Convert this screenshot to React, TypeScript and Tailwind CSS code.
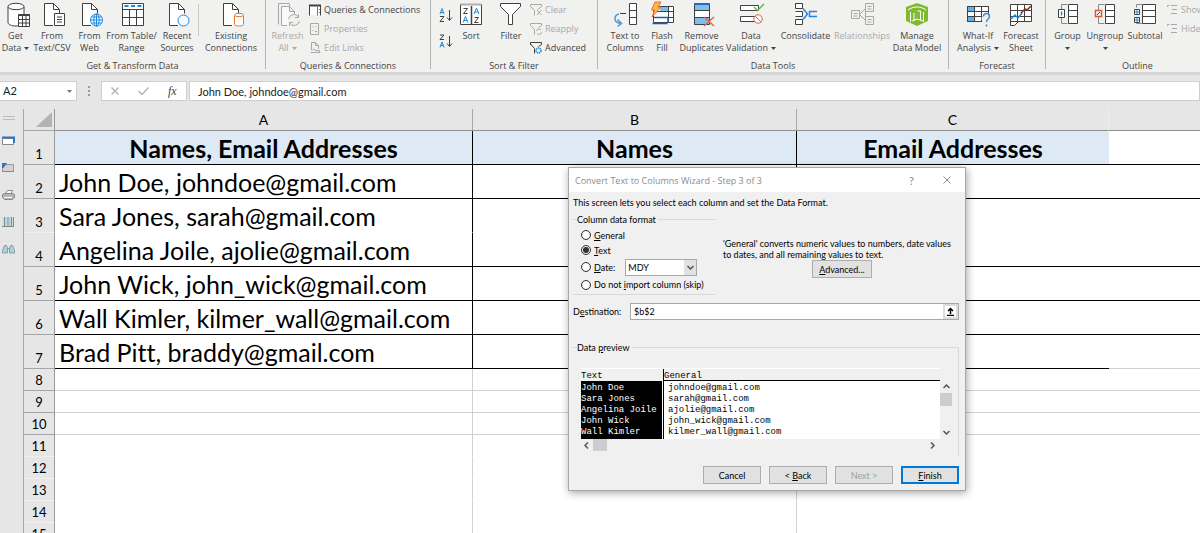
import type { ReactNode } from 'react';

const INK = '#404040';
const BLUE = '#1e88e0';
const GRAY = '#a8a8a8';

function Caret() {
  return (
    <svg width="5" height="3" viewBox="0 0 5 3" className="inline-block shrink-0">
      <path d="M0 0h5L2.5 3z" fill="currentColor" />
    </svg>
  );
}

/* ---------- Ribbon icons, all drawn on a 24 x 24 grid ---------- */

function Icon({ children, color = INK }: { children: ReactNode; color?: string }) {
  return (
    <svg
      width="24"
      height="24"
      viewBox="0 0 24 24"
      fill="none"
      stroke={color}
      className="shrink-0 overflow-visible"
      aria-hidden="true"
    >
      {children}
    </svg>
  );
}

function Doc({ children, color = INK }: { children?: ReactNode; color?: string }) {
  return (
    <Icon color={color}>
      <path d="M13 23.5H4.5v-22h9l6 6v4l-6 12z" fill="#fff" stroke="none" />
      <path d="M13 23.5H4.5v-22h9l6 6v4M13.5 1.5v6h6" />
      {children}
    </Icon>
  );
}

const GetDataIcon = () => (
  <Icon>
    <path d="M4 4.5v16c0 2 3.5 3.5 8 3.5s8-1.5 8-3.5v-16" fill="#fff" />
    <ellipse cx="12" cy="4.5" rx="8" ry="3.2" fill="#fff" />
    <path d="M14.5 12.5h11v12h-11z" fill="#fff" />
    <path d="M14.5 13h11" strokeWidth="2" />
    <path d="M14.5 17.5h11M14.5 21h11M18.5 13v11M22 13v11" />
  </Icon>
);

const FromTextIcon = () => (
  <Doc>
    <path d="M14.5 11.5h10v12h-10z" fill="#fff" />
    <path d="M17 15h5M17 17.5h5M17 20h5" />
  </Doc>
);

const FromWebIcon = () => (
  <Doc>
    <g stroke={BLUE}>
      <circle cx="18.5" cy="18" r="6" fill="#fff" />
      <ellipse cx="18.5" cy="18" rx="2.7" ry="6" />
      <path d="M12.5 18h12M13.5 15h10M13.5 21h10M18.5 12v12" />
    </g>
  </Doc>
);

const FromTableIcon = () => (
  <Icon>
    <path d="M2.5 1.5h21v22h-21z" fill="#fff" />
    <path d="M2.5 7.5h21M2.5 15.5h21M9.5 7.5v16M16.5 7.5v16" />
    <path d="M4.5 4h4M11 4h4M17.5 4h4" stroke={BLUE} strokeWidth="2" />
  </Icon>
);

const RecentIcon = () => (
  <Doc>
    <circle cx="18.5" cy="18.5" r="5.5" fill="#f6fafd" stroke={BLUE} />
  </Doc>
);

const ExistingIcon = () => (
  <Doc>
    <g stroke="#e07a35">
      <path d="M15.5 13.5v9c0 2 9 2 9 0v-9" fill="#fff" />
      <ellipse cx="20" cy="13" rx="4.5" ry="1.7" fill="#fff" />
    </g>
  </Doc>
);

const RefreshIcon = () => (
  <Icon color={GRAY}>
    <path d="M2.5 22.5v-21h11v3" />
    <path d="M11 23.5H5.5v-19h8l5 5v3M13.5 4.5v5h5" fill="#f8f8f8" />
    <circle cx="18" cy="18" r="6" fill="#f1f1f0" stroke="none" />
    <path d="M12.5 17a5.5 5.5 0 0 1 10-2M22.5 12v3.5H19M23.5 19a5.5 5.5 0 0 1-10 2M13.5 24v-3.5H17" />
  </Icon>
);

const SortIcon = () => (
  <Icon>
    <path d="M1.5 2.5h21v20h-21z" fill="#fff" />
    <path d="M1.5 2.5h21" strokeWidth="2" stroke="#b0b0b0" />
    <path d="M12.5 4v18" strokeWidth="1.5" />
    <path d="M4.5 6.5h4l-4 5h4M15.5 15.5h4l-4 5h4" />
    <path d="M4 20.5l2.5-6 2.5 6M5 18.5h3M15 12l2.5-6L20 12M16 10h3" stroke={BLUE} />
  </Icon>
);

const FilterIcon = () => (
  <Icon>
    <path d="M1.5 1.5h20v3l-8 8v10h-4v-10l-8-8z" fill="#fff" />
  </Icon>
);

const TextToColumnsIcon = () => (
  <Icon>
    <path d="M16.5 1.5h7v21h-7" fill="#fff" />
    <path d="M16.5 1.5v21M16.5 8.5h7M16.5 15.5h7M7 11.5h6" />
    <path d="M6 12c-5 1-6 8 1 9.500M4.500 17.500l4 4-4 3" stroke="#4a9ad8" strokeWidth="1.500" />
  </Icon>
);

const FlashFillIcon = () => (
  <Icon>
    <path d="M3.5 4.5h20v16h-20z" fill="#fff" />
    <path d="M10 5h8v5h-8z" fill="#7cc0ee" stroke="none" />
    <path d="M3.5 9.5h20M3.5 15.5h20M18.5 4.5v16" />
    <path d="M2.5 21.5h15M4 15.5h14v5.5" stroke="#1f5fa8" strokeWidth="1.5" />
    <path d="M5 0h6L8 5h3L2 15l2.5-7h-3z" fill="#ffb54c" stroke="#e8722c" />
  </Icon>
);

const RemoveDuplicatesIcon = () => (
  <Icon>
    <path d="M4.5 1.5h15v21h-15z" fill="#fff" />
    <path d="M5 2h14v6H5zM5 16h14v6H5z" fill="#7cc0ee" stroke="none" />
    <path d="M4 2h16" stroke="#2a6ab0" strokeWidth="2" />
    <path d="M4.5 8.5h15M4.5 15.5h15" />
    <path d="M14 15l10 9M24 15l-10 9" stroke="#d9694a" strokeWidth="1.5" />
  </Icon>
);

const DataValidationIcon = () => (
  <Icon>
    <path d="M1.5 3.5h18v5h-18zM1.5 14.5h18v5h-18z" fill="#fff" />
    <path d="M15 5l3.5 3.5L25 2" stroke="#71b544" strokeWidth="1.5" />
    <circle cx="19" cy="17" r="4.2" fill="#fff" stroke="#e0603a" />
    <path d="M16 14l6 6" stroke="#e0603a" />
  </Icon>
);

const ConsolidateIcon = () => (
  <Icon>
    <path d="M8.5 1.500v5h-7v-5zM1.500 1.500h7M1.500 9.500h7v5h-7M8.500 17.500h-7v5h7z" fill="#fff" />
    <path d="M9 6.500l4.500 5.500L9 17.500M23 9.500h-7.500v5H23" stroke={BLUE} strokeWidth="1.500" />
  </Icon>
);

const RelationshipsIcon = () => (
  <Icon color={GRAY}>
    <path d="M1.5 8.5h8v8h-8zM15.5 1.5h8v8h-8zM15.5 14.5h8v8h-8z" />
    <path d="M3.5 11.5h4M3.5 14h4M17.5 4.5h4M17.5 7h4M17.5 17.5h4M17.5 20h4M9.5 12.5l6-6v12z" />
  </Icon>
);

const DataModelIcon = () => (
  <Icon>
    <path d="M12 1l11 4v14l-11 5-11-5V5z" fill="#7fba2f" stroke="none" />
    <path d="M3 8c5-4 13-4 18 0M5.5 10v10M18.5 10v10M9 11v8M12.5 9h3v9M7 19l5-2 6 2" stroke="#fff" />
  </Icon>
);

const WhatIfIcon = () => (
  <Icon>
    <path d="M1.5 4.5h21v15h-21z" fill="#fff" />
    <path d="M2 5h7v4H2zM2 15h7v4H2z" fill="#5fb0ea" stroke="none" />
    <path d="M1.5 4.5h21v15h-21zM1.5 9.5h21M1.5 14.5h21M8.5 4.5v15M15.5 4.5v15" />
    <circle cx="20.5" cy="17" r="5" fill="#f1f1f0" stroke="none" />
    <path d="M17.5 14.5c0-4 6-4 6 0 0 2.5-3 2.5-3 5.5M20.5 22.5v2" stroke="#3a90d8" strokeWidth="1.5" />
  </Icon>
);

const ForecastIcon = () => (
  <Icon>
    <path d="M1.5 2.5h21v17h-13l-4 4h-4z" fill="#fff" />
    <path d="M1.5 8.5h21M1.5 14.5h21M8.5 2.5v17M15.5 2.5v17M2 19.5h8" />
    <path d="M2 17l4-4 3 3 4-5" stroke={BLUE} strokeWidth="1.5" />
    <path d="M12 11l4-4 2 1 4-4" stroke="#8a2b1c" strokeWidth="1.5" />
  </Icon>
);

const GroupIcon = () => (
  <Icon>
    <path d="M11.5 2.5h-6v19h6" stroke="#8a8a8a" />
    <path d="M12.5 2.5h9v19h-9zM12.5 8.5h9M12.5 14.5h9" fill="#fff" />
    <path d="M2.5 7.5h6v8h-6z" fill="#fff" />
    <path d="M5.5 9.5v4" stroke={BLUE} strokeWidth="1.5" />
  </Icon>
);

const UngroupIcon = () => (
  <Icon>
    <path d="M11.5 2.5h-6v19h6" stroke="#8a8a8a" />
    <path d="M12.5 2.5h9v19h-9zM12.5 8.5h9M12.5 14.5h9" fill="#fff" />
    <path d="M2.5 8.5h6v6h-6z" fill="#fff" stroke="#e0552c" strokeWidth="1.5" />
    <path d="M4 13l3-3" />
  </Icon>
);

const SubtotalIcon = () => (
  <Icon>
    <path d="M9.5 2.5h13v19h-13zM9.5 8.5h13M9.5 14.5h13" fill="#fff" />
    <path d="M9 2.5H3.5v3M9 21.5H3.5v-1" stroke="#8a8a8a" />
    <path d="M1.5 7.5h5v5h-5zM1.5 15.5h5v5h-5z" fill="#fff" />
    <path d="M2 10h4M4 8v4M2 18h4M4 16v4" stroke={BLUE} />
  </Icon>
);

/* ---------- Small ribbon icons, 12 x 12 ---------- */

function SmallIcon({ children, color = INK }: { children: ReactNode; color?: string }) {
  return (
    <svg width="12" height="12" viewBox="0 0 12 12" fill="none" stroke={color} className="shrink-0" aria-hidden="true">
      {children}
    </svg>
  );
}

const QueriesIcon = () => (
  <SmallIcon>
    <path d="M1 2h10v9H1z" fill="#fff" stroke="none" />
    <path d="M.5 1v10.5M11.5 1v10.5" />
    <path d="M0 1.5h12" strokeWidth="2" />
    <path d="M8.5 3v8.5M10.5 5v1M10.5 8v1" stroke={BLUE} />
  </SmallIcon>
);

const PropertiesIcon = () => (
  <SmallIcon color={GRAY}>
    <path d="M1.5.5h8v11h-8zM3.5 4h1M6.5 3.5h1M3.5 7.5h1M6 8.5h2" />
  </SmallIcon>
);

const EditLinksIcon = () => (
  <SmallIcon color={GRAY}>
    <path d="M2.5 8V.5h4l3 3V7M6.5.5v3h3M3 8.5c1.5-2 4-1 4 .5M1.5 10.5h10M6 8.5h4.5v2" />
  </SmallIcon>
);

const ClearIcon = () => (
  <SmallIcon color={GRAY}>
    <path d="M.5.5h11v2l-4 3M.5.5v2l4 4v5M7 6l4.5 5M11.5 6L7 11" />
  </SmallIcon>
);

const ReapplyIcon = () => (
  <SmallIcon color={GRAY}>
    <path d="M.5.5h11v2l-3 2M.5.5v2l4 4v5M6.5 8a2.5 2.5 0 0 1 4.5-1M11.5 9A2.5 2.5 0 0 1 7 10.5" />
  </SmallIcon>
);

const AdvancedIcon = () => (
  <SmallIcon>
    <path d="M.5 3V.5h11v2l-3 2M.5 2l4 4.5v5" />
    <circle cx="8.5" cy="8.5" r="2.5" stroke={BLUE} strokeWidth="1.5" strokeDasharray="1.5 .6" />
  </SmallIcon>
);

const DetailIcon = () => (
  <SmallIcon color={GRAY}>
    <path d="M1.5 3V1.5h2M5 1.5h6M6 5.5h5M5 9.5h6" />
  </SmallIcon>
);

function SortOrder({ flip, label }: { flip?: boolean; label: string }) {
  return (
    <button type="button" aria-label={label}>
      <svg width="14" height="14" viewBox="0 0 14 14" fill="none" className="block">
        <path d={flip ? 'M1 13.5L3 8l2 5.5M1.8 11.500h2.500' : 'M1 6L3 .5 5 6M1.800 4.500h2.500'} stroke={BLUE} />
        <path d={flip ? 'M1 1h4L1 5.500h4' : 'M1 8.500h4l-4 5h4'} stroke={INK} />
        <path d="M10.5 2v10M8 9.5l2.5 3 2.5-3" stroke={INK} />
      </svg>
    </button>
  );
}

/* ---------- Ribbon ---------- */

type RibbonButtonProps = {
  icon: ReactNode;
  lines: [string, string?];
  width: string;
  caret?: boolean;
  disabled?: boolean;
};

function RibbonButton({ icon, lines, width, caret, disabled }: RibbonButtonProps) {
  return (
    <button
      type="button"
      disabled={disabled}
      className={`${width} flex shrink-0 flex-col items-center gap-1 pt-0.5 text-[#444] disabled:text-[#a8a8a8]`}
    >
      {icon}
      <span className="flex flex-col items-center leading-3 whitespace-nowrap">
        <span>{lines[0]}</span>
        <span className="flex h-3 items-center gap-[3px]">
          {lines[1]}
          {caret && <Caret />}
        </span>
      </span>
    </button>
  );
}

function SmallButton({ icon, label, disabled }: { icon: ReactNode; label: string; disabled?: boolean }) {
  return (
    <button
      type="button"
      disabled={disabled}
      className="flex h-[19px] items-center gap-[3px] whitespace-nowrap text-[#444] disabled:text-[#a8a8a8]"
    >
      {icon}
      {label}
    </button>
  );
}

function Group({ label, width, children }: { label: string; width: string; children: ReactNode }) {
  return (
    <section aria-label={label} className={`${width} h-[72px] shrink-0`}>
      <div className="flex h-[69px] flex-col border-r border-[#b4b4b4]">
        <div className="flex h-[59px] shrink-0">{children}</div>
        <span className="shrink-0 text-center leading-[13px] text-[#444]">{label}</span>
      </div>
    </section>
  );
}

function Ribbon() {
  return (
    <div className="flex h-[72px] shrink-0 overflow-hidden bg-[#f1f1f0] font-['Open_Sans',sans-serif] text-[9px]">
      <Group label="Get & Transform Data" width="w-[266px]">
        <RibbonButton icon={<GetDataIcon />} lines={['Get', 'Data']} width="w-[31px]" caret />
        <RibbonButton icon={<FromTextIcon />} lines={['From', 'Text/CSV']} width="w-[42px]" />
        <RibbonButton icon={<FromWebIcon />} lines={['From', 'Web']} width="w-[33px]" />
        <RibbonButton icon={<FromTableIcon />} lines={['From Table/', 'Range']} width="w-[51px]" />
        <RibbonButton icon={<RecentIcon />} lines={['Recent', 'Sources']} width="w-[40px]" />
        <div className="mx-px mt-1 h-8 w-px bg-[#c8c8c8]" />
        <RibbonButton icon={<ExistingIcon />} lines={['Existing', 'Connections']} width="w-[62px]" />
      </Group>

      <Group label="Queries & Connections" width="w-[165px]">
        <RibbonButton icon={<RefreshIcon />} lines={['Refresh', 'All']} width="w-[43px]" caret disabled />
        <div className="flex flex-col">
          <SmallButton icon={<QueriesIcon />} label="Queries & Connections" />
          <SmallButton icon={<PropertiesIcon />} label="Properties" disabled />
          <SmallButton icon={<EditLinksIcon />} label="Edit Links" disabled />
        </div>
      </Group>

      <Group label="Sort & Filter" width="w-[167px]">
        <div className="ml-2 flex w-[18px] flex-col gap-3 pt-2">
          <SortOrder label="Sort A to Z" />
          <SortOrder label="Sort Z to A" flip />
        </div>
        <RibbonButton icon={<SortIcon />} lines={['Sort']} width="w-[28px]" />
        <RibbonButton icon={<FilterIcon />} lines={['Filter']} width="w-[52px]" />
        <div className="-ml-[7px] flex flex-col">
          <SmallButton icon={<ClearIcon />} label="Clear" disabled />
          <SmallButton icon={<ReapplyIcon />} label="Reapply" disabled />
          <SmallButton icon={<AdvancedIcon />} label="Advanced" />
        </div>
      </Group>

      <Group label="Data Tools" width="w-[351px]">
        <div className="flex pl-2">
          <RibbonButton icon={<TextToColumnsIcon />} lines={['Text to', 'Columns']} width="w-[38px]" />
          <RibbonButton icon={<FlashFillIcon />} lines={['Flash', 'Fill']} width="w-[36px]" />
          <RibbonButton icon={<RemoveDuplicatesIcon />} lines={['Remove', 'Duplicates']} width="w-[43px]" />
          <RibbonButton icon={<DataValidationIcon />} lines={['Data', 'Validation']} width="w-[56px]" caret />
          <RibbonButton icon={<ConsolidateIcon />} lines={['Consolidate']} width="w-[53px]" />
          <RibbonButton icon={<RelationshipsIcon />} lines={['Relationships']} width="w-[60px]" disabled />
          <RibbonButton icon={<DataModelIcon />} lines={['Manage', 'Data Model']} width="w-[50px]" />
        </div>
      </Group>

      <Group label="Forecast" width="w-[97px]">
        <div className="flex pl-2">
          <RibbonButton icon={<WhatIfIcon />} lines={['What-If', 'Analysis']} width="w-[42px]" caret />
          <RibbonButton icon={<ForecastIcon />} lines={['Forecast', 'Sheet']} width="w-[44px]" />
        </div>
      </Group>

      <Group label="Outline" width="w-[184px]">
        <div className="flex pl-1">
          <RibbonButton icon={<GroupIcon />} lines={['Group', '']} width="w-[35px]" caret />
          <RibbonButton icon={<UngroupIcon />} lines={['Ungroup', '']} width="w-[40px]" caret />
          <RibbonButton icon={<SubtotalIcon />} lines={['Subtotal']} width="w-[40px]" />
          <div className="flex flex-col pl-px">
            <SmallButton icon={<DetailIcon />} label="Show Detail" disabled />
            <SmallButton icon={<DetailIcon />} label="Hide Detail" disabled />
          </div>
        </div>
      </Group>
    </div>
  );
}

/* ---------- Formula bar ---------- */

function FormulaBar() {
  return (
    <div className="flex h-[37px] shrink-0 border-t-[3px] border-[#d6d6d6] bg-[#e6e6e6] pt-1.5 font-['Lato',sans-serif] text-[11px] text-[#222]">
      <div className="flex h-5 w-[77px] items-center border border-l-0 border-[#cfcfcf] bg-white pr-1 pl-[3px]">
        <input aria-label="Name box" defaultValue="A2" className="w-0 flex-1 outline-none" />
        <button type="button" aria-label="Open name list" className="text-[#777]">
          <Caret />
        </button>
      </div>
      <div className="flex h-5 w-6 flex-col items-center justify-center gap-0.5">
        <span className="size-0.5 bg-[#999]" />
        <span className="size-0.5 bg-[#999]" />
        <span className="size-0.5 bg-[#999]" />
      </div>
      <div className="flex h-5 w-[86px] items-center justify-around border border-[#cfcfcf] bg-white">
        <button type="button" aria-label="Cancel entry">
          <svg width="8" height="8" viewBox="0 0 8 8" stroke="#b5b5b5" strokeWidth="1.5">
            <path d="M.5.5l7 7M7.5.5l-7 7" />
          </svg>
        </button>
        <button type="button" aria-label="Enter">
          <svg width="11" height="8" viewBox="0 0 11 8" fill="none" stroke="#b5b5b5" strokeWidth="1.5">
            <path d="M.5 4L4 7.5l6.5-7" />
          </svg>
        </button>
        <button type="button" className="font-['Liberation_Serif',serif] text-xs text-[#444] italic">
          fx
        </button>
      </div>
      <input
        aria-label="Formula"
        defaultValue="John Doe, johndoe@gmail.com"
        className="ml-0.5 h-5 flex-1 border border-[#cfcfcf] bg-white px-2 outline-none"
      />
    </div>
  );
}

/* ---------- Side toolbar ---------- */

function SideToolbar() {
  return (
    <div
      role="toolbar"
      aria-label="Quick tools"
      className="flex w-6 shrink-0 flex-col items-center gap-[15px] border-r border-[#a6a6a6] pt-[7px] pr-1.5"
    >
      <div className="flex h-1 w-3 flex-col justify-between">
        <span className="h-px bg-[#bdbdbd]" />
        <span className="h-px bg-[#bdbdbd]" />
      </div>
      <button type="button" aria-label="Freeze panes">
        <svg width="13" height="12" viewBox="0 0 13 12" fill="none" className="block">
          <path d="M.5 3.5h11v6H.5z" fill="#fff" stroke="#888" />
          <path d="M0 2.5h13M12 2v6" stroke="#2f75c0" strokeWidth="2" />
        </svg>
      </button>
      <button type="button" aria-label="Select object">
        <svg width="13" height="12" viewBox="0 0 13 12" fill="none" className="block">
          <path d="M.5 2.5h11v7H.5z" fill="#d8d0d0" stroke="#999" />
          <path d="M0 1h5L1.5 6H0z" fill="#2f75c0" />
          <path d="M0 9.5h12" stroke="#888" />
        </svg>
      </button>
      <button type="button" aria-label="Print">
        <svg width="13" height="12" viewBox="0 0 13 12" fill="none" stroke="#888" className="block">
          <path d="M3.5 4.5l2-3h5l-1.5 3" fill="#fff" />
          <path d="M.5 5.5l2-1h8l2 1v3l-2 2h-8l-2-2z" fill="#b4b4b4" />
          <path d="M2 8.5h8" stroke="#fff" />
        </svg>
      </button>
      <button type="button" aria-label="Columns">
        <svg width="13" height="12" viewBox="0 0 13 12" fill="none" className="block">
          <path d="M0 1.5h12v9H0z" fill="#dcdcdc" />
          <path d="M4 1v10M8 1v10" stroke="#a9dbe8" strokeWidth="2" />
          <path d="M2.5 1v10M6 1v10M9.5 1v10M11.5 1v10M0 10.5h12" stroke="#888" />
        </svg>
      </button>
      <button type="button" aria-label="Find">
        <svg width="13" height="12" viewBox="0 0 13 12" fill="none" stroke="#8a9a9e" className="block">
          <path d="M.5 10V7.5l2-5h2l1 3V10zM7.5 10V5.5l1-3h2l2 5V10z" fill="#a9d3dc" />
          <path d="M5 5.5h3" />
        </svg>
      </button>
    </div>
  );
}

/* ---------- Worksheet ---------- */

const people = [
  'John Doe, johndoe@gmail.com',
  'Sara Jones, sarah@gmail.com',
  'Angelina Joile, ajolie@gmail.com',
  'John Wick, john_wick@gmail.com',
  'Wall Kimler, kilmer_wall@gmail.com',
  'Brad Pitt, braddy@gmail.com',
];

const emptyRows = [8, 9, 10, 11, 12, 13, 14, 15];

function RowHeader({ n, faint }: { n: number; faint?: boolean }) {
  return (
    <th
      scope="row"
      className={`border-r border-b border-r-[#999] bg-[#e6e6e6] text-center align-bottom text-[13px] leading-[20px] font-normal ${
        faint ? 'border-b-[#efefef]' : 'border-b-[#a6a6a6]'
      }`}
    >
      {n}
    </th>
  );
}

function Sheet() {
  const heading = 'border-b border-black bg-[#dde9f5] text-center text-[25px] leading-[30px] font-bold';
  const letter = 'border-r border-b border-b-[#8e8e8e] text-[14px] leading-[20px] font-normal';
  return (
    <table className="w-full min-w-0 flex-1 table-fixed border-separate border-spacing-0 self-start font-['Lato',sans-serif] text-black [font-variant-ligatures:none]">
      <colgroup>
        <col className="w-[31px]" />
        <col className="w-[418px]" />
        <col className="w-[324px]" />
        <col className="w-[312px]" />
        <col />
      </colgroup>
      <thead>
        <tr className="h-[22px] bg-[#e6e6e6]">
          <td className="border-r border-b border-r-[#999] border-b-[#a6a6a6] pr-0.5">
            <svg width="16" height="15" viewBox="0 0 16 15" className="ml-auto block">
              <path d="M16 0v15H0z" fill="#b5b2b0" />
            </svg>
          </td>
          <th scope="col" className={`${letter} border-r-[#a6a6a6]`}>A</th>
          <th scope="col" className={`${letter} border-r-[#a6a6a6]`}>B</th>
          <th scope="col" className={`${letter} border-r-[#efefef]`}>C</th>
          <td className="border-b border-[#8e8e8e]" />
        </tr>
      </thead>
      <tbody>
        <tr className="h-[34px]">
          <RowHeader n={1} />
          <td className={`${heading} border-r`}>Names, Email Addresses</td>
          <td className={`${heading} border-r`}>Names</td>
          <td className={heading}>Email Addresses</td>
          <td className="border-b border-black" />
        </tr>
        {people.map((person, i) => {
          // row 3 has no rule under it, and the last rule stops at column C
          const rule = i === 1 ? 'border-b-transparent' : 'border-b-black';
          const last = i === people.length - 1;
          return (
            <tr key={person} className="h-[34px]">
              <RowHeader n={i + 2} faint={i === 1} />
              <td className={`border-r border-b border-r-black pl-1 text-[25px] leading-[30px] whitespace-nowrap ${rule}`}>
                {person}
              </td>
              <td className={`border-r border-b border-r-black ${rule}`} />
              <td className={`border-b ${rule}`} />
              <td className={`border-b ${last ? 'border-b-[#d0d0d0]' : rule}`} />
            </tr>
          );
        })}
        {emptyRows.map((n) => {
          const rule = n < 11 ? 'border-b-[#d0d0d0]' : 'border-b-transparent';
          return (
            <tr key={n} className="h-[22px]">
              <RowHeader n={n} faint={n > 10} />
              <td className={`border-r border-b border-r-[#d0d0d0] ${rule}`} />
              <td className={`border-r border-b border-r-[#d0d0d0] ${rule}`} />
              <td className={`border-b ${rule}`} />
              <td className={`border-b ${rule}`} />
            </tr>
          );
        })}
      </tbody>
    </table>
  );
}

/* ---------- Wizard dialog ---------- */

const preview = [
  ['John Doe', 'johndoe@gmail.com'],
  ['Sara Jones', 'sarah@gmail.com'],
  ['Angelina Joile', 'ajolie@gmail.com'],
  ['John Wick', 'john_wick@gmail.com'],
  ['Wall Kimler', 'kilmer_wall@gmail.com'],
];

function FormatOption({ value, children, checked }: { value: string; children: ReactNode; checked?: boolean }) {
  return (
    <label className="flex items-center gap-[3px]">
      <input
        type="radio"
        name="format"
        value={value}
        defaultChecked={checked}
        className="size-[10px] shrink-0 appearance-none rounded-full border border-[#333] bg-white bg-clip-content p-px checked:bg-[#333]"
      />
      <span>{children}</span>
    </label>
  );
}

function Chevron({ className }: { className?: string }) {
  return (
    <svg width="7" height="5" viewBox="0 0 7 5" fill="none" stroke="#555" strokeWidth="1.5" className={className}>
      <path d="M.5 4l3-3 3 3" />
    </svg>
  );
}

function Preview() {
  return (
    <div className="grid grid-cols-[359px_12px] font-['Liberation_Mono',monospace] text-[9px] leading-[11px]">
      <table className="w-full table-fixed border-separate border-spacing-0 border-t border-white bg-white text-left">
        <colgroup>
          <col className="w-[82px]" />
          <col />
        </colgroup>
        <thead className="bg-[#f0f0f0] leading-[7px]">
          <tr className="h-3">
            <th className="border-b border-[#f0f0f0] align-bottom font-normal">Text</th>
            <th className="border-b border-l border-black align-bottom font-normal">General</th>
          </tr>
        </thead>
        <tbody>
          <tr className="h-0.5">
            <td className="border-r border-white bg-black" />
            <td className="border-l border-black" />
          </tr>
          {preview.map(([name, email]) => (
            <tr key={name}>
              <td className="border-r border-white bg-black whitespace-nowrap text-white">{name}</td>
              <td className="border-l border-black pl-1">{email}</td>
            </tr>
          ))}
          <tr className="h-px">
            <td className="border-r border-white bg-black" />
            <td className="border-l border-black" />
          </tr>
        </tbody>
      </table>
      <div className="flex flex-col items-center pt-4 pb-1">
        <Chevron />
        <span className="mt-1 h-[13px] w-full bg-[#cdcdcd]" />
        <Chevron className="mt-auto rotate-180" />
      </div>
      <div className="flex h-3 items-center pr-1 pl-0.5">
        <Chevron className="-rotate-90" />
        <span className="ml-[3px] h-3 w-[14px] bg-[#cdcdcd]" />
        <Chevron className="ml-auto rotate-90" />
      </div>
    </div>
  );
}

function Wizard() {
  const button = 'h-[18px] w-[58px] border border-[#adadad] bg-[#e1e1e1] disabled:text-[#9aa39a]';
  return (
    <div
      role="dialog"
      aria-labelledby="wizard-title"
      className="absolute top-[167px] left-[568px] w-[398px] border border-[#a8a8a8] bg-[#f0f0f0] font-['Lato',sans-serif] text-[9px] leading-[11px] text-black shadow-[1px_2px_8px_rgba(0,0,0,0.35)]"
    >
      <div className="flex h-6 items-center bg-white pl-1.5 text-[#8c8c8c]">
        <h1 id="wizard-title" className="font-['Open_Sans',sans-serif] text-[9px]">
          Convert Text to Columns Wizard - Step 3 of 3
        </h1>
        <button type="button" aria-label="Help" className="mr-[29px] ml-auto text-[11px]">
          ?
        </button>
        <button type="button" aria-label="Close" className="mr-[14px]">
          <svg width="8" height="8" viewBox="0 0 8 8" stroke="#8c8c8c">
            <path d="M.5.5l7 7M7.5.5l-7 7" />
          </svg>
        </button>
      </div>

      <div className="px-1 pt-[5px] pb-1.5">
        <p>This screen lets you select each column and set the Data Format.</p>

        <div className="mt-1.5 flex">
          <fieldset className="w-[142px] shrink-0 border-y border-[#d8d8d8] pt-px pb-[3px] pl-2">
            <legend className="-ml-1 pr-0.5">Column data format</legend>
            <div className="flex h-[18px] items-center">
              <FormatOption value="general">
                <u>G</u>eneral
              </FormatOption>
            </div>
            <div className="flex h-3 items-center">
              <FormatOption value="text" checked>
                <u>T</u>ext
              </FormatOption>
            </div>
            <div className="flex h-[22px] items-center gap-2.5">
              <FormatOption value="date">
                <u>D</u>ate:
              </FormatOption>
              <span className="relative flex">
                <select
                  aria-label="Date format"
                  className="h-[17px] w-[72px] appearance-none border border-[#a8a8a8] bg-white pl-0.5 outline-none"
                >
                  <option>MDY</option>
                  <option>DMY</option>
                  <option>YMD</option>
                </select>
                <span className="pointer-events-none absolute inset-y-px right-px flex w-3 items-center justify-center bg-[#e1e1e1]">
                  <Chevron className="rotate-180" />
                </span>
              </span>
            </div>
            <div className="flex h-[13px] items-center">
              <FormatOption value="skip">
                Do not <u>i</u>mport column (skip)
              </FormatOption>
            </div>
          </fieldset>
          <div className="flex flex-1 flex-col items-center pt-6 pl-2">
            <p className="w-full">
              'General' converts numeric values to numbers, date values to dates, and all remaining values to text.
            </p>
            <button type="button" className="h-[18px] w-[60px] border border-[#adadad] bg-[#e1e1e1]">
              <u>A</u>dvanced...
            </button>
          </div>
        </div>

        <div className="mt-2 flex items-center">
          <label htmlFor="destination" className="w-[57px]">
            D<u>e</u>stination:
          </label>
          <div className="mr-0.5 flex h-[17px] flex-1 border border-[#a8a8a8] bg-white">
            <input id="destination" defaultValue="$b$2" className="w-0 flex-1 px-[3px] outline-none" />
            <button
              type="button"
              aria-label="Pick range"
              className="flex w-[15px] items-center justify-center border-2 border-[#dcdcdc] bg-white"
            >
              <svg width="7" height="9" viewBox="0 0 7 9" fill="none" stroke="#000" strokeWidth="1.5">
                <path d="M3.5 7V1.5M1 4l2.5-2.5L6 4M0 8.5h7" />
              </svg>
            </button>
          </div>
        </div>

        <fieldset className="mt-[22px] mr-0.5 h-[114px] border-t border-r border-[#d8d8d8] pl-2">
          <legend className="-ml-1 pr-0.5">
            Data <u>p</u>review
          </legend>
          <div className="mt-[15px]">
            <Preview />
          </div>
        </fieldset>

        <div className="mt-2.5 mr-0.5 flex justify-end gap-2">
          <button type="button" className={button}>
            Cancel
          </button>
          <button type="button" className={button}>
            &lt; <u>B</u>ack
          </button>
          <button type="button" className={button} disabled>
            Next &gt;
          </button>
          <button type="button" className="h-[18px] w-[58px] border-2 border-[#0078d7] bg-[#e1e1e1]">
            <u>F</u>inish
          </button>
        </div>
      </div>
    </div>
  );
}

export default function App() {
  return (
    <div className="relative flex h-screen flex-col overflow-hidden bg-white">
      <Ribbon />
      <FormulaBar />
      <div className="flex min-h-0 flex-1 overflow-hidden">
        <div className="flex bg-[#e6e6e6]">
          <SideToolbar />
        </div>
        <Sheet />
      </div>
      <Wizard />
    </div>
  );
}
